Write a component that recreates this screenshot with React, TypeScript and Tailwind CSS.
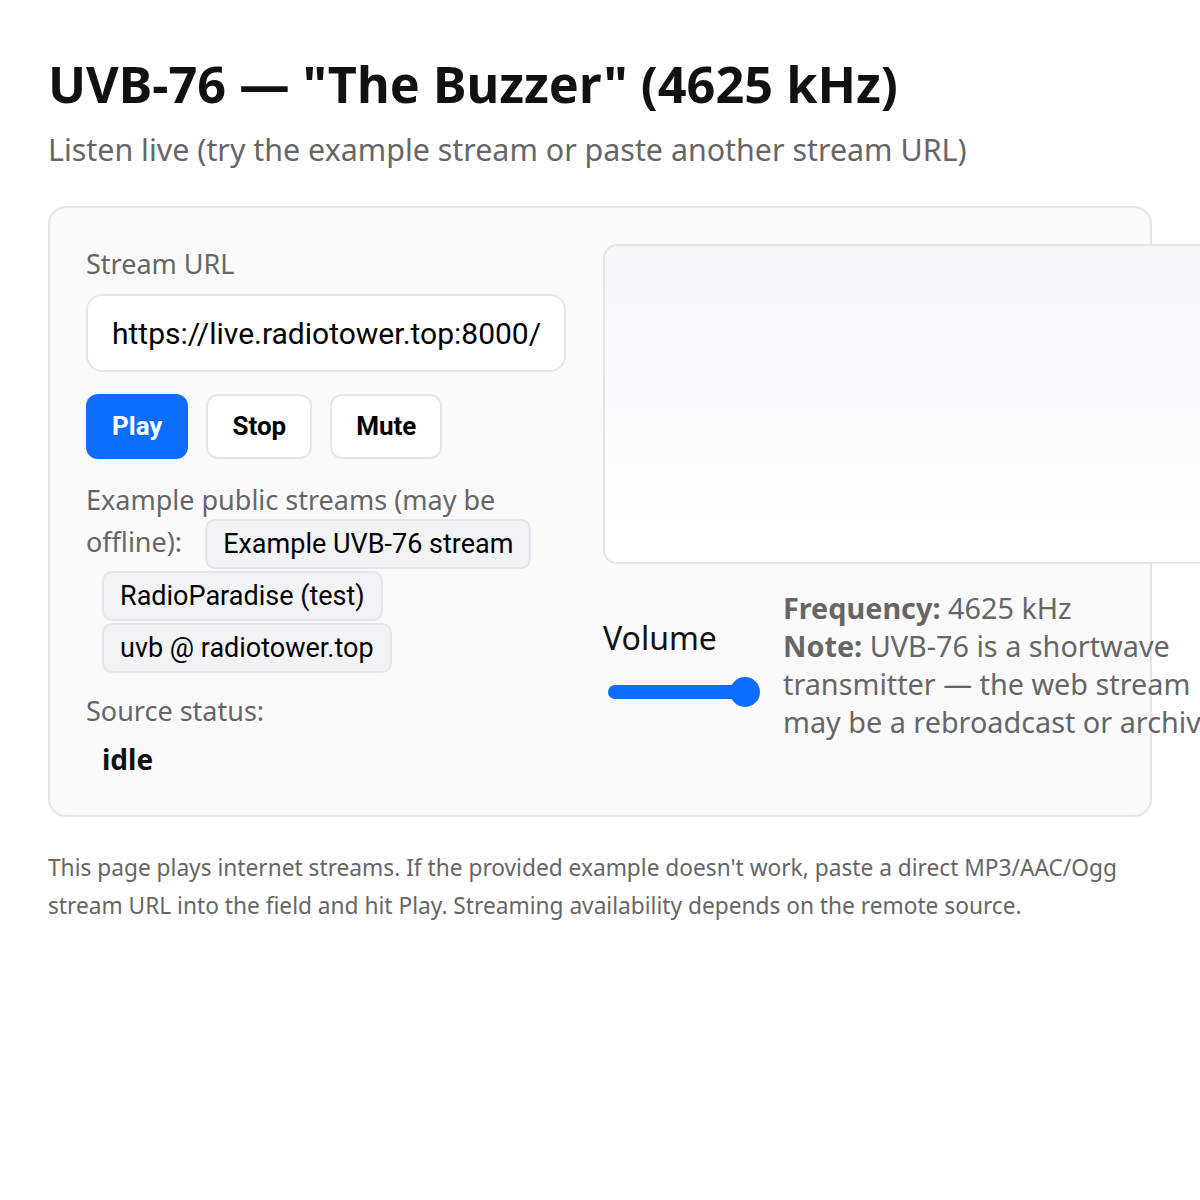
import React, { useState } from "react";

const streams = [
  { label: "Example UVB-76 stream", url: "https://live.radiotower.top:8000/uvb76" },
  { label: "RadioParadise (test)", url: "https://stream.radioparadise.com/mp3-128" },
  { label: "uvb @ radiotower.top", url: "https://radiotower.top/uvb" },
];

export default function App() {
  const [url, setUrl] = useState(streams[0].url);
  const [status] = useState("idle");

  return (
    <div className="w-full overflow-hidden bg-white font-['Noto_Sans',sans-serif]">
      <div className="px-12 pt-[54px] pb-20">
        <h1 className="text-[50.4px] font-bold leading-[1.2] text-[#111]">
          UVB-76 — "The Buzzer" (4625 kHz)
        </h1>
        <p className="mt-[13px] text-[30.4px] leading-[1.5] text-[#666]">
          Listen live (try the example stream or paste another stream URL)
        </p>

        <div className="mt-[33px] w-[1104px] rounded-[18px] border-2 border-[#e6e6e6] bg-[#fafafa] px-9 pt-9 pb-[35px]">
          <div className="flex gap-[37px]">
            {/* controls column */}
            <div className="w-[480px] shrink-0">
              <div className="text-[27px] leading-[39px] text-[#666]">Stream URL</div>
              <input
                value={url}
                onChange={(e) => setUrl(e.target.value)}
                className="mt-[11px] h-[78px] w-[480px] rounded-[16px] border-2 border-[#e6e6e6] bg-white px-6 font-['Roboto',sans-serif] text-[30px] text-black outline-none"
              />
              <div className="mt-[22px] flex gap-[18px] font-['Roboto',sans-serif] text-[26px] font-bold">
                <button className="h-[65px] rounded-[12px] bg-[#0d6efd] px-[26px] text-white">Play</button>
                <button className="h-[65px] rounded-[12px] border-2 border-[#e6e6e6] bg-white px-[24px] text-black">
                  Stop
                </button>
                <button className="h-[65px] rounded-[12px] border-2 border-[#e6e6e6] bg-white px-[24px] text-black">
                  Mute
                </button>
              </div>
              <div className="mt-[22px] text-[27px] leading-[38px] text-[#666]">
                Example public streams (may be offline):{" "}
                {streams.map((s) => (
                  <button
                    key={s.label}
                    onClick={() => setUrl(s.url)}
                    className="mb-[2px] ml-4 inline-block h-[50px] rounded-[10px] border-2 border-[#e3e6ea] bg-[#f1f3f5] px-4 align-middle font-['Roboto',sans-serif] text-[27px] leading-[46px] text-black"
                  >
                    {s.label}
                  </button>
                ))}
              </div>
              <div className="mt-[16px] text-[27px] leading-[39px] text-[#666]">Source status:</div>
              <div className="mt-[8px] pl-4 text-[28px] font-bold leading-[1.5] text-[#111]">{status}</div>
            </div>

            {/* visualizer + volume column */}
            <div className="w-[640px] shrink-0">
              <div className="h-[320px] rounded-[14px] border-2 border-[#e6e6e6] bg-gradient-to-b from-[#f5f7f9] to-white" />
              <div className="mt-[25px] flex items-center gap-[22px]">
                <div className="w-[158px] shrink-0 pb-[8px]">
                  <div className="text-[32px] leading-[44px] text-[#111]">Volume</div>
                  <div className="relative mt-[17px] ml-[5px] h-[30px] w-[152px]">
                    <div className="absolute top-[8px] left-0 h-[14px] w-[150px] rounded-full bg-[#0d6efd]" />
                    <div className="absolute top-0 right-0 h-[30px] w-[30px] rounded-full bg-[#0d6efd]" />
                  </div>
                </div>
                <div className="w-[458px] shrink-0 text-[28.8px] leading-[38px] text-[#666]">
                  <div>
                    <b>Frequency:</b> 4625 kHz
                  </div>
                  <div>
                    <b>Note:</b> UVB-76 is a shortwave transmitter — the web stream may be a rebroadcast or archive.
                  </div>
                </div>
              </div>
            </div>
          </div>
        </div>

        <p className="mt-[32px] w-[1104px] text-[22.7px] leading-[38px] text-[#666]">
          This page plays internet streams. If the provided example doesn't work, paste a direct MP3/AAC/Ogg stream URL
          into the field and hit Play. Streaming availability depends on the remote source.
        </p>
      </div>
    </div>
  );
}
